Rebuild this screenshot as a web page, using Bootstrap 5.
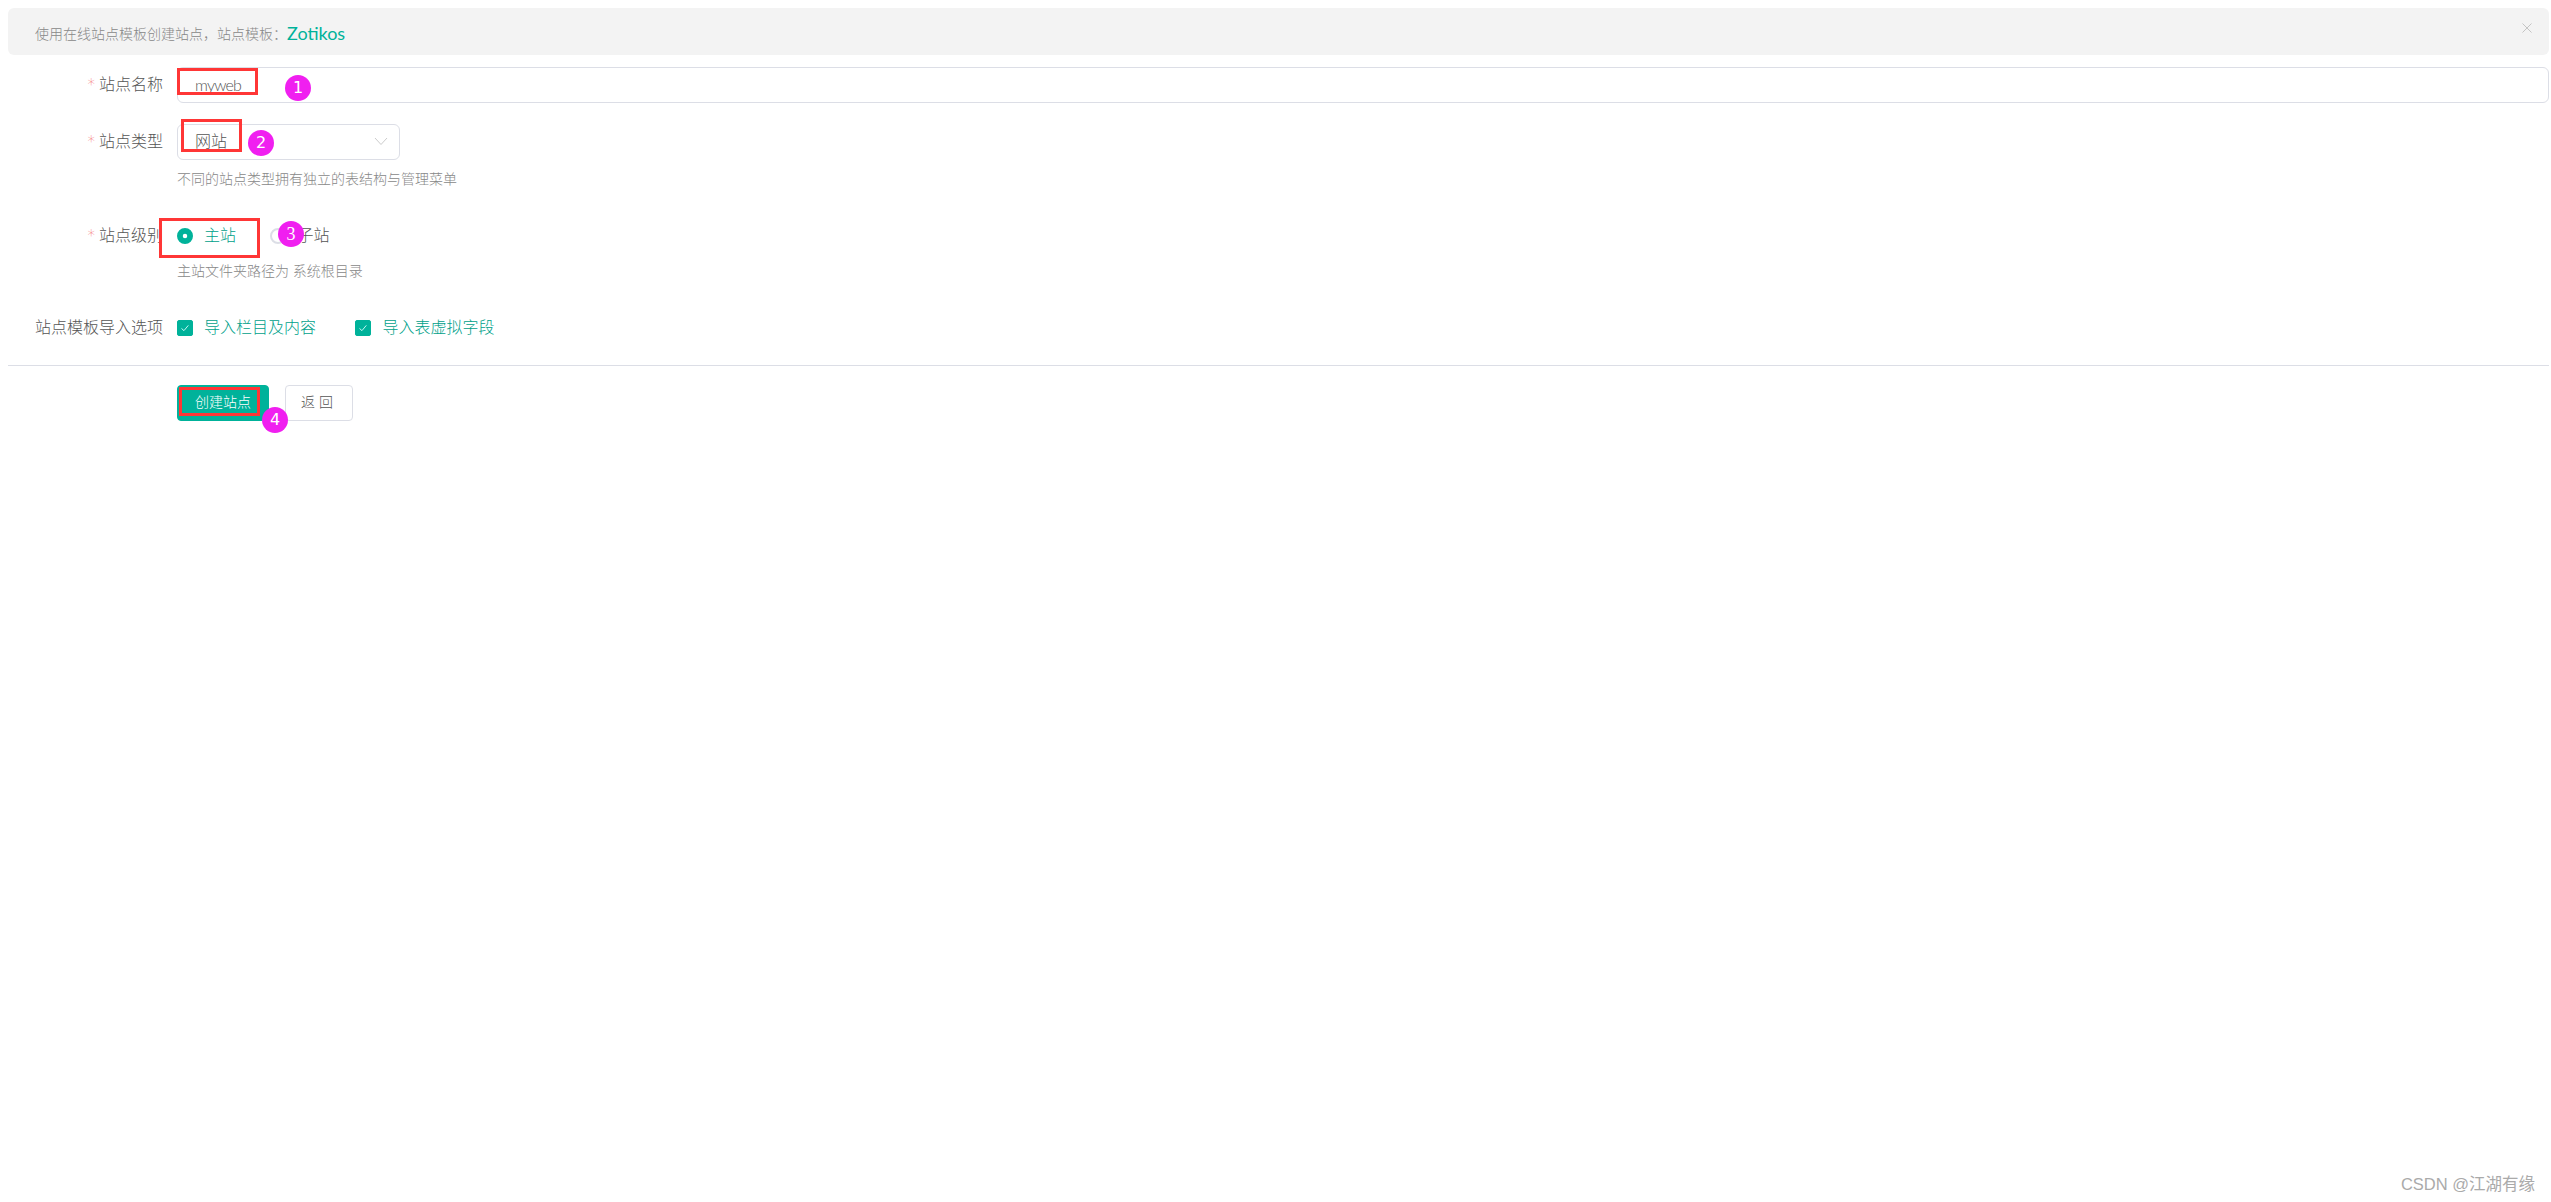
<!DOCTYPE html>
<html lang="zh-CN">
<head>
<meta charset="utf-8">
<title>创建站点</title>
<link href="https://cdn.jsdelivr.net/npm/bootstrap@5.3.0/dist/css/bootstrap.min.css" rel="stylesheet">
<style>
html,body{height:100%;}
body{position:relative;margin:0;padding:8px 2px 0 8px;background:#fff;color:#666;font-family:"Lato","Noto Sans CJK SC",sans-serif;font-size:16px;font-weight:300;line-height:35px;overflow:hidden;}
.tip-bar{position:relative;height:47px;margin:0 0 12px;padding:0 0 0 27px;background:#f3f3f3;border:0;border-radius:6px;color:#888;font-size:14px;line-height:50px;}
.tip-link{color:#00b29a;font-size:18px;font-weight:400;text-decoration:none;vertical-align:-1px;}
.tip-x{position:absolute;right:16px;top:14px;width:12px;height:12px;display:block;}
.frow{display:flex;gap:14px;}
.flabel{width:155px;flex:none;text-align:right;color:#555;line-height:33px;}
.flabel i{font-style:normal;font-family:"DejaVu Sans",sans-serif;font-size:15px;color:#f56c6c;margin-right:4px;}
.fbody{flex:1;min-width:0;}
.name-input.form-control{height:36px;width:100%;padding:0 17px 2px;border:1px solid #dcdee6;border-radius:6px;font-size:16px;font-weight:300;letter-spacing:-.8px;color:#555;box-shadow:none;line-height:32px;}
.type-wrap{position:relative;width:223px;}
.type-wrap svg{position:absolute;right:12px;top:13px;}
.type-select.form-select{height:36px;padding:0 17px 2px;border:1px solid #dcdee6;border-radius:6px;font-size:16px;font-weight:300;color:#555;background-image:none;line-height:32px;}
.fhelp{color:#888;font-size:14px;line-height:20px;}
.row-two{margin-top:21px;}
.row-three{margin-top:29px;}
.row-four{margin-top:29px;}
.hint-one{margin-top:9px;}
.hint-two{margin-top:8px;}
.opt{display:inline-flex;align-items:center;gap:11px;margin:0;padding:0;min-height:35px;vertical-align:top;}
.opt .form-check-input{float:none;margin:0;width:16px;height:16px;flex:none;border:1px solid #dcdee6;box-shadow:none;}
.opt .form-check-input[type=radio]{border-width:2px;}
.opt .form-check-input:checked{background-color:#00b29a;border-color:#00b29a;}
.opt .form-check-input[type=radio]:checked{background-image:url("data:image/svg+xml,%3csvg xmlns='http://www.w3.org/2000/svg' viewBox='-8 -8 16 16'%3e%3ccircle r='3' fill='%23fff'/%3e%3c/svg%3e");}
.opt .form-check-input[type=checkbox]{border-radius:2px;}
.opt .form-check-input[type=checkbox]:checked{background-image:url("data:image/svg+xml,%3csvg xmlns='http://www.w3.org/2000/svg' viewBox='0 0 16 16'%3e%3cpath d='M4 8.500l2.800 2.500 5-6' fill='none' stroke='%23dff' stroke-width='1'/%3e%3c/svg%3e");}
.opt .form-check-label{color:#555;margin-top:-2px;line-height:33px;}
.opt .form-check-input:checked + .form-check-label{color:#009f8a;}
.radio-gap{margin-left:30px;}
.check-gap{margin-left:35px;}
.rule{margin:20px 0 19px;border:0;border-top:1px solid #dcdee6;opacity:1;}
.act-row{padding-left:169px;display:flex;gap:16px;}
.btn-make.btn{width:92px;height:36px;padding:0 0 2px;background:#00b29a;border:1px solid #00b29a;border-radius:4px;color:#fff;font-size:14px;font-weight:300;line-height:32px;}
.btn-back.btn{width:68px;height:36px;padding:0 0 2px;background:#fff;border:1px solid #dcdee6;border-radius:4px;color:#555;font-size:14px;font-weight:300;line-height:32px;letter-spacing:4px;}
.redbox{position:absolute;border:3px solid #ff3636;pointer-events:none;}
.rb1{left:177px;top:68px;width:81px;height:27px;}
.rb2{left:181px;top:119px;width:61px;height:33px;}
.rb3{left:159px;top:218px;width:101px;height:40px;}
.rb4{left:179px;top:387px;width:81px;height:29px;}
.numdot{position:absolute;width:26px;height:26px;border-radius:50%;background:#f01ff0;color:#fff;text-align:center;font-size:16px;font-weight:400;line-height:26px;font-family:"DejaVu Sans",sans-serif;}
.nd1{left:285px;top:75px;}
.nd2{left:248px;top:130px;}
.nd3{left:278px;top:221px;font-family:"Liberation Serif",serif;font-size:18px;}
.nd4{left:262px;top:407px;}
.wmark{position:absolute;right:16px;bottom:6px;color:#aaa;font-family:"Liberation Sans","Noto Sans CJK SC",sans-serif;font-size:16.500px;font-weight:400;line-height:24px;}
</style>
</head>
<body>
<div class="alert tip-bar" role="alert">使用在线站点模板创建站点，站点模板：<a class="tip-link" href="#">Zotikos</a>
<svg class="tip-x" viewBox="0 0 12 12"><path d="M1.500 1.500l9 9M10.500 1.500l-9 9" stroke="#c4c4c4" stroke-width="1" fill="none"/></svg></div>
<form>
<div class="frow">
  <label class="flabel"><i>*</i>站点名称</label>
  <div class="fbody"><input class="form-control name-input" type="text" value="myweb"></div>
</div>
<div class="frow row-two">
  <label class="flabel"><i>*</i>站点类型</label>
  <div class="fbody">
    <div class="type-wrap"><select class="form-select type-select"><option>网站</option></select>
      <svg width="14" height="9" viewBox="0 0 14 9"><path d="M1 1l6 6.500 6-6.500" stroke="#ccc" stroke-width="1" fill="none"/></svg></div>
    <div class="fhelp hint-one">不同的站点类型拥有独立的表结构与管理菜单</div>
  </div>
</div>
<div class="frow row-three">
  <label class="flabel"><i>*</i>站点级别</label>
  <div class="fbody">
    <div class="form-check opt"><input class="form-check-input" type="radio" name="lv" id="lv1" checked><label class="form-check-label" for="lv1">主站</label></div>
    <div class="form-check opt radio-gap"><input class="form-check-input" type="radio" name="lv" id="lv2"><label class="form-check-label" for="lv2">子站</label></div>
    <div class="fhelp hint-two">主站文件夹路径为 系统根目录</div>
  </div>
</div>
<div class="frow row-four">
  <label class="flabel">站点模板导入选项</label>
  <div class="fbody">
    <div class="form-check opt"><input class="form-check-input" type="checkbox" id="c1" checked><label class="form-check-label" for="c1">导入栏目及内容</label></div>
    <div class="form-check opt check-gap"><input class="form-check-input" type="checkbox" id="c2" checked><label class="form-check-label" for="c2">导入表虚拟字段</label></div>
  </div>
</div>
<hr class="rule">
<div class="act-row">
  <button type="button" class="btn btn-make">创建站点</button>
  <button type="button" class="btn btn-back">返回</button>
</div>
</form>
<div class="redbox rb1"></div><div class="redbox rb2"></div><div class="redbox rb3"></div><div class="redbox rb4"></div>
<div class="numdot nd1">1</div><div class="numdot nd2">2</div><div class="numdot nd3">3</div><div class="numdot nd4">4</div>
<div class="wmark">CSDN @江湖有缘</div>
<script src="https://cdn.jsdelivr.net/npm/bootstrap@5.3.0/dist/js/bootstrap.bundle.min.js"></script>
</body>
</html>
